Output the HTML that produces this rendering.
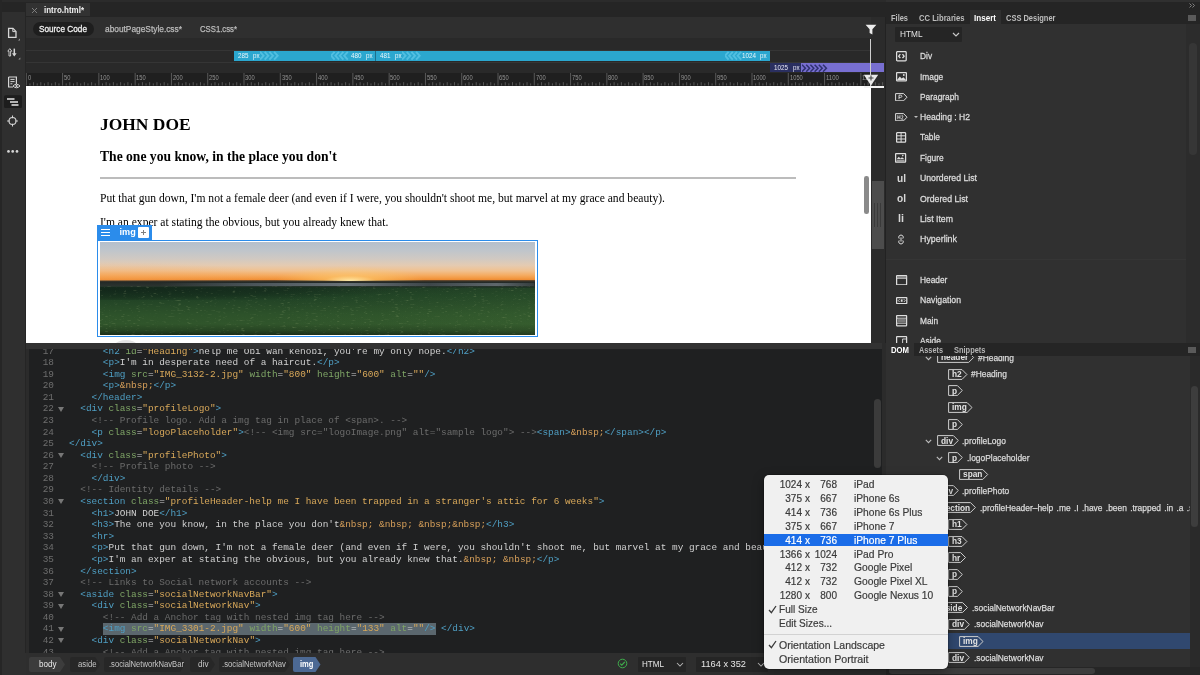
<!DOCTYPE html><html><head><meta charset="utf-8"><title>Dreamweaver</title><style>
*{margin:0;padding:0;box-sizing:border-box}
html,body{width:1200px;height:675px;overflow:hidden;background:#2d2d2d}
body{position:relative;font-family:"Liberation Sans",sans-serif;font-size:10px;color:#c8c8c8}
.a{position:absolute}
.t{position:absolute;white-space:pre;line-height:1}
.ui{font-family:"Liberation Sans",sans-serif;font-size:9.6px;color:#c4c4c4;transform-origin:0 50%}
.b{font-weight:bold}
.code{position:absolute;white-space:pre;font-family:"Liberation Mono",monospace;font-size:9.4051px;line-height:11.58px;height:11.58px;color:#d0d0d0}
.ln{position:absolute;white-space:pre;font-family:"Liberation Mono",monospace;font-size:9.4051px;line-height:11.58px;height:11.58px;color:#6e6e6e;text-align:right;width:30px}
.tg{color:#4f9fc4}.at{color:#7fa566}.st{color:#d8a85a}.cm{color:#6b6b6b}.en{color:#d8a05a}
.serif{font-family:"Liberation Serif",serif;color:#000}
</style></head><body><div id="root" style="position:absolute;left:0;top:0;width:1200px;height:675px;will-change:transform">
<div class="a" style="left:0px;top:0px;width:1200px;height:2px;background:#2b2b2b;"></div>
<div class="a" style="left:0px;top:2px;width:886px;height:15px;background:#252525;"></div>
<div class="a" style="left:26px;top:3px;width:64px;height:13px;background:#323232;"></div>
<div class="a" style="left:0px;top:12px;width:26px;height:663px;background:#2f2f2f;"></div>
<div class="a" style="left:0px;top:0px;width:2px;height:675px;background:#262626;"></div>
<div class="a" style="left:26px;top:17px;width:858px;height:56px;background:#2f2f2f;"></div>
<div class="a" style="left:26px;top:38px;width:858px;height:35px;background:#292929;"></div>
<div class="a" style="left:25px;top:12px;width:1px;height:641px;background:#252525;"></div>
<div class="a" style="left:26px;top:50px;width:858px;height:1px;background:#353535;"></div>
<div class="a" style="left:26px;top:62px;width:858px;height:1px;background:#353535;"></div>
<div class="a" style="left:26px;top:73px;width:858px;height:12.5px;background:#1f1f1f;"></div>
<div class="a" style="left:26px;top:85.5px;width:845px;height:257.5px;background:#ffffff;"></div>
<div class="a" style="left:26px;top:343px;width:860px;height:6px;background:#323232;"></div>
<div class="a" style="left:26px;top:349px;width:860px;height:304px;background:#1f2021;"></div>
<div class="a" style="left:26px;top:349px;width:3px;height:304px;background:#2b2b2b;"></div>
<div class="a" style="left:882px;top:343px;width:4px;height:310px;background:#2b2b2b;"></div>
<div class="a" style="left:26px;top:653px;width:860px;height:22px;background:#2e2e2e;"></div>
<div class="a" style="left:871px;top:17px;width:13.5px;height:326px;background:#2b2b2b;"></div>
<div class="a" style="left:884.5px;top:17px;width:1.5px;height:326px;background:#222222;"></div>
<div class="a" style="left:886px;top:0px;width:314px;height:675px;background:#303030;"></div>
<svg class="a" style="left:31px;top:6.7px" width="7" height="7" viewBox="0 0 7 7"><path d="M1 1L6 6M6 1L1 6" stroke="#868686" stroke-width="0.9" fill="none"/></svg>
<div class="t ui" style="left:44.00px;top:3.10px;height:14px;line-height:14px;font-size:9.50px;color:#f0f0f0;font-weight:bold;transform:scaleX(0.8422);">intro.html*</div>
<div class="a" style="left:32.7px;top:22px;width:61px;height:14px;border-radius:7px;background:#1e1e1e"></div>
<div class="t ui" style="left:39.00px;top:22.00px;height:14px;line-height:14px;font-size:9.60px;color:#f0f0f0;-webkit-text-stroke:0.3px #f0f0f0;transform:scaleX(0.8566);">Source Code</div>
<div class="t ui" style="left:105.00px;top:22.00px;height:14px;line-height:14px;font-size:9.60px;color:#bdbdbd;-webkit-text-stroke:0.25px #bdbdbd;transform:scaleX(0.8692);">aboutPageStyle.css*</div>
<div class="t ui" style="left:200.00px;top:22.00px;height:14px;line-height:14px;font-size:9.60px;color:#bdbdbd;-webkit-text-stroke:0.25px #bdbdbd;transform:scaleX(0.8064);">CSS1.css*</div>
<div class="a" style="left:234px;top:51px;width:536px;height:10.2px;background:#2ba7cf"></div>
<div class="a" style="left:375px;top:51px;width:1px;height:10.2px;background:#1d6f8c"></div>
<div class="a" style="left:770px;top:63.2px;width:114px;height:9.3px;background:#786fd1"></div>
<div class="a" style="left:770px;top:63.2px;width:31px;height:9.3px;background:#2a2f60"></div>
<div class="t ui" style="left:237.50px;top:49.40px;height:14px;line-height:14px;font-size:7.40px;color:#e9f6fb;transform:scaleX(0.8504);">285</div>
<div class="t ui" style="left:252.50px;top:49.40px;height:14px;line-height:14px;font-size:7.40px;color:#e9f6fb;transform:scaleX(0.8445);">px</div>
<svg class="a" style="left:259.6px;top:51.4px" width="22.4" height="9.4"><path d="M0.0 0.8L3.6 4.7L0.0 8.6M4.7 0.8L8.3 4.7L4.7 8.6M9.4 0.8L13.0 4.7L9.4 8.6M14.1 0.8L17.7 4.7L14.1 8.6" stroke="#52bfe1" stroke-width="1.9" fill="none"/></svg>
<svg class="a" style="left:331.0px;top:51.4px" width="21.2" height="9.4"><path d="M3.6 0.8L0.0 4.7L3.6 8.6M8.0 0.8L4.4 4.7L8.0 8.6M12.4 0.8L8.8 4.7L12.4 8.6M16.8 0.8L13.2 4.7L16.8 8.6" stroke="#52bfe1" stroke-width="1.9" fill="none"/></svg>
<div class="t ui" style="left:351.00px;top:49.40px;height:14px;line-height:14px;font-size:7.40px;color:#e9f6fb;transform:scaleX(0.8504);">480</div>
<div class="t ui" style="left:366.00px;top:49.40px;height:14px;line-height:14px;font-size:7.40px;color:#e9f6fb;transform:scaleX(0.8445);">px</div>
<div class="t ui" style="left:379.60px;top:49.40px;height:14px;line-height:14px;font-size:7.40px;color:#e9f6fb;transform:scaleX(0.8504);">481</div>
<div class="t ui" style="left:394.60px;top:49.40px;height:14px;line-height:14px;font-size:7.40px;color:#e9f6fb;transform:scaleX(0.8445);">px</div>
<svg class="a" style="left:401.7px;top:51.4px" width="22.4" height="9.4"><path d="M0.0 0.8L3.6 4.7L0.0 8.6M4.7 0.8L8.3 4.7L4.7 8.6M9.4 0.8L13.0 4.7L9.4 8.6M14.1 0.8L17.7 4.7L14.1 8.6" stroke="#52bfe1" stroke-width="1.9" fill="none"/></svg>
<svg class="a" style="left:724.5px;top:51.4px" width="20.4" height="9.4"><path d="M3.6 0.8L0.0 4.7L3.6 8.6M7.8 0.8L4.2 4.7L7.8 8.6M12.0 0.8L8.4 4.7L12.0 8.6M16.2 0.8L12.6 4.7L16.2 8.6" stroke="#52bfe1" stroke-width="1.9" fill="none"/></svg>
<div class="t ui" style="left:741.70px;top:49.40px;height:14px;line-height:14px;font-size:7.40px;color:#e9f6fb;transform:scaleX(0.8504);">1024</div>
<div class="t ui" style="left:760.20px;top:49.40px;height:14px;line-height:14px;font-size:7.40px;color:#e9f6fb;transform:scaleX(0.8445);">px</div>
<div class="t ui" style="left:774.20px;top:61.00px;height:14px;line-height:14px;font-size:7.40px;color:#e6e6f5;transform:scaleX(0.8504);">1025</div>
<div class="t ui" style="left:792.70px;top:61.00px;height:14px;line-height:14px;font-size:7.40px;color:#e6e6f5;transform:scaleX(0.8445);">px</div>
<svg class="a" style="left:802.0px;top:63.6px" width="28.6" height="8.5"><path d="M0.0 0.8L3.4 4.2L0.0 7.7M4.2 0.8L7.6 4.2L4.2 7.7M8.4 0.8L11.8 4.2L8.4 7.7M12.6 0.8L16.0 4.2L12.6 7.7M16.8 0.8L20.2 4.2L16.8 7.7M21.0 0.8L24.4 4.2L21.0 7.7" stroke="#2f3170" stroke-width="1.5" fill="none"/></svg>
<svg class="a" style="left:26px;top:73px" width="858" height="12.5"><path d="M0.30 0.0V12.5M3.93 10.4V12.5M7.56 9.2V12.5M11.19 10.4V12.5M14.81 9.2V12.5M18.44 10.4V12.5M22.07 9.2V12.5M25.70 10.4V12.5M29.33 9.2V12.5M32.96 10.4V12.5M36.59 0.0V12.5M40.21 10.4V12.5M43.84 9.2V12.5M47.47 10.4V12.5M51.10 9.2V12.5M54.73 10.4V12.5M58.36 9.2V12.5M61.98 10.4V12.5M65.61 9.2V12.5M69.24 10.4V12.5M72.87 0.0V12.5M76.50 10.4V12.5M80.13 9.2V12.5M83.76 10.4V12.5M87.38 9.2V12.5M91.01 10.4V12.5M94.64 9.2V12.5M98.27 10.4V12.5M101.90 9.2V12.5M105.53 10.4V12.5M109.16 0.0V12.5M112.78 10.4V12.5M116.41 9.2V12.5M120.04 10.4V12.5M123.67 9.2V12.5M127.30 10.4V12.5M130.93 9.2V12.5M134.55 10.4V12.5M138.18 9.2V12.5M141.81 10.4V12.5M145.44 0.0V12.5M149.07 10.4V12.5M152.70 9.2V12.5M156.33 10.4V12.5M159.95 9.2V12.5M163.58 10.4V12.5M167.21 9.2V12.5M170.84 10.4V12.5M174.47 9.2V12.5M178.10 10.4V12.5M181.73 0.0V12.5M185.35 10.4V12.5M188.98 9.2V12.5M192.61 10.4V12.5M196.24 9.2V12.5M199.87 10.4V12.5M203.50 9.2V12.5M207.12 10.4V12.5M210.75 9.2V12.5M214.38 10.4V12.5M218.01 0.0V12.5M221.64 10.4V12.5M225.27 9.2V12.5M228.90 10.4V12.5M232.52 9.2V12.5M236.15 10.4V12.5M239.78 9.2V12.5M243.41 10.4V12.5M247.04 9.2V12.5M250.67 10.4V12.5M254.30 0.0V12.5M257.92 10.4V12.5M261.55 9.2V12.5M265.18 10.4V12.5M268.81 9.2V12.5M272.44 10.4V12.5M276.07 9.2V12.5M279.69 10.4V12.5M283.32 9.2V12.5M286.95 10.4V12.5M290.58 0.0V12.5M294.21 10.4V12.5M297.84 9.2V12.5M301.47 10.4V12.5M305.09 9.2V12.5M308.72 10.4V12.5M312.35 9.2V12.5M315.98 10.4V12.5M319.61 9.2V12.5M323.24 10.4V12.5M326.87 0.0V12.5M330.49 10.4V12.5M334.12 9.2V12.5M337.75 10.4V12.5M341.38 9.2V12.5M345.01 10.4V12.5M348.64 9.2V12.5M352.26 10.4V12.5M355.89 9.2V12.5M359.52 10.4V12.5M363.15 0.0V12.5M366.78 10.4V12.5M370.41 9.2V12.5M374.04 10.4V12.5M377.66 9.2V12.5M381.29 10.4V12.5M384.92 9.2V12.5M388.55 10.4V12.5M392.18 9.2V12.5M395.81 10.4V12.5M399.44 0.0V12.5M403.06 10.4V12.5M406.69 9.2V12.5M410.32 10.4V12.5M413.95 9.2V12.5M417.58 10.4V12.5M421.21 9.2V12.5M424.83 10.4V12.5M428.46 9.2V12.5M432.09 10.4V12.5M435.72 0.0V12.5M439.35 10.4V12.5M442.98 9.2V12.5M446.61 10.4V12.5M450.23 9.2V12.5M453.86 10.4V12.5M457.49 9.2V12.5M461.12 10.4V12.5M464.75 9.2V12.5M468.38 10.4V12.5M472.00 0.0V12.5M475.63 10.4V12.5M479.26 9.2V12.5M482.89 10.4V12.5M486.52 9.2V12.5M490.15 10.4V12.5M493.78 9.2V12.5M497.40 10.4V12.5M501.03 9.2V12.5M504.66 10.4V12.5M508.29 0.0V12.5M511.92 10.4V12.5M515.55 9.2V12.5M519.18 10.4V12.5M522.80 9.2V12.5M526.43 10.4V12.5M530.06 9.2V12.5M533.69 10.4V12.5M537.32 9.2V12.5M540.95 10.4V12.5M544.57 0.0V12.5M548.20 10.4V12.5M551.83 9.2V12.5M555.46 10.4V12.5M559.09 9.2V12.5M562.72 10.4V12.5M566.35 9.2V12.5M569.97 10.4V12.5M573.60 9.2V12.5M577.23 10.4V12.5M580.86 0.0V12.5M584.49 10.4V12.5M588.12 9.2V12.5M591.75 10.4V12.5M595.37 9.2V12.5M599.00 10.4V12.5M602.63 9.2V12.5M606.26 10.4V12.5M609.89 9.2V12.5M613.52 10.4V12.5M617.14 0.0V12.5M620.77 10.4V12.5M624.40 9.2V12.5M628.03 10.4V12.5M631.66 9.2V12.5M635.29 10.4V12.5M638.92 9.2V12.5M642.54 10.4V12.5M646.17 9.2V12.5M649.80 10.4V12.5M653.43 0.0V12.5M657.06 10.4V12.5M660.69 9.2V12.5M664.32 10.4V12.5M667.94 9.2V12.5M671.57 10.4V12.5M675.20 9.2V12.5M678.83 10.4V12.5M682.46 9.2V12.5M686.09 10.4V12.5M689.71 0.0V12.5M693.34 10.4V12.5M696.97 9.2V12.5M700.60 10.4V12.5M704.23 9.2V12.5M707.86 10.4V12.5M711.49 9.2V12.5M715.11 10.4V12.5M718.74 9.2V12.5M722.37 10.4V12.5M726.00 0.0V12.5M729.63 10.4V12.5M733.26 9.2V12.5M736.89 10.4V12.5M740.51 9.2V12.5M744.14 10.4V12.5M747.77 9.2V12.5M751.40 10.4V12.5M755.03 9.2V12.5M758.66 10.4V12.5M762.28 0.0V12.5M765.91 10.4V12.5M769.54 9.2V12.5M773.17 10.4V12.5M776.80 9.2V12.5M780.43 10.4V12.5M784.06 9.2V12.5M787.68 10.4V12.5M791.31 9.2V12.5M794.94 10.4V12.5M798.57 0.0V12.5M802.20 10.4V12.5M805.83 9.2V12.5M809.46 10.4V12.5M813.08 9.2V12.5M816.71 10.4V12.5M820.34 9.2V12.5M823.97 10.4V12.5M827.60 9.2V12.5M831.23 10.4V12.5M834.86 0.0V12.5M838.48 10.4V12.5M842.11 9.2V12.5M845.74 10.4V12.5M849.37 9.2V12.5M853.00 10.4V12.5M856.63 9.2V12.5" stroke="#6c6c6c" stroke-width="0.75" fill="none"/></svg>
<div class="t ui" style="left:27.60px;top:70.60px;height:14px;line-height:14px;font-size:6.80px;color:#929292;transform:scaleX(0.8461);">0</div>
<div class="t ui" style="left:63.89px;top:70.60px;height:14px;line-height:14px;font-size:6.80px;color:#929292;transform:scaleX(0.8461);">50</div>
<div class="t ui" style="left:100.17px;top:70.60px;height:14px;line-height:14px;font-size:6.80px;color:#929292;transform:scaleX(0.8461);">100</div>
<div class="t ui" style="left:136.46px;top:70.60px;height:14px;line-height:14px;font-size:6.80px;color:#929292;transform:scaleX(0.8461);">150</div>
<div class="t ui" style="left:172.74px;top:70.60px;height:14px;line-height:14px;font-size:6.80px;color:#929292;transform:scaleX(0.8461);">200</div>
<div class="t ui" style="left:209.03px;top:70.60px;height:14px;line-height:14px;font-size:6.80px;color:#929292;transform:scaleX(0.8461);">250</div>
<div class="t ui" style="left:245.31px;top:70.60px;height:14px;line-height:14px;font-size:6.80px;color:#929292;transform:scaleX(0.8461);">300</div>
<div class="t ui" style="left:281.60px;top:70.60px;height:14px;line-height:14px;font-size:6.80px;color:#929292;transform:scaleX(0.8461);">350</div>
<div class="t ui" style="left:317.88px;top:70.60px;height:14px;line-height:14px;font-size:6.80px;color:#929292;transform:scaleX(0.8461);">400</div>
<div class="t ui" style="left:354.17px;top:70.60px;height:14px;line-height:14px;font-size:6.80px;color:#929292;transform:scaleX(0.8461);">450</div>
<div class="t ui" style="left:390.45px;top:70.60px;height:14px;line-height:14px;font-size:6.80px;color:#929292;transform:scaleX(0.8461);">500</div>
<div class="t ui" style="left:426.74px;top:70.60px;height:14px;line-height:14px;font-size:6.80px;color:#929292;transform:scaleX(0.8461);">550</div>
<div class="t ui" style="left:463.02px;top:70.60px;height:14px;line-height:14px;font-size:6.80px;color:#929292;transform:scaleX(0.8461);">600</div>
<div class="t ui" style="left:499.31px;top:70.60px;height:14px;line-height:14px;font-size:6.80px;color:#929292;transform:scaleX(0.8461);">650</div>
<div class="t ui" style="left:535.59px;top:70.60px;height:14px;line-height:14px;font-size:6.80px;color:#929292;transform:scaleX(0.8461);">700</div>
<div class="t ui" style="left:571.87px;top:70.60px;height:14px;line-height:14px;font-size:6.80px;color:#929292;transform:scaleX(0.8461);">750</div>
<div class="t ui" style="left:608.16px;top:70.60px;height:14px;line-height:14px;font-size:6.80px;color:#929292;transform:scaleX(0.8461);">800</div>
<div class="t ui" style="left:644.44px;top:70.60px;height:14px;line-height:14px;font-size:6.80px;color:#929292;transform:scaleX(0.8461);">850</div>
<div class="t ui" style="left:680.73px;top:70.60px;height:14px;line-height:14px;font-size:6.80px;color:#929292;transform:scaleX(0.8461);">900</div>
<div class="t ui" style="left:717.01px;top:70.60px;height:14px;line-height:14px;font-size:6.80px;color:#929292;transform:scaleX(0.8461);">950</div>
<div class="t ui" style="left:753.30px;top:70.60px;height:14px;line-height:14px;font-size:6.80px;color:#929292;transform:scaleX(0.8461);">1000</div>
<div class="t ui" style="left:789.58px;top:70.60px;height:14px;line-height:14px;font-size:6.80px;color:#929292;transform:scaleX(0.8461);">1050</div>
<div class="t ui" style="left:825.87px;top:70.60px;height:14px;line-height:14px;font-size:6.80px;color:#929292;transform:scaleX(0.8753);">1100</div>
<div class="t ui" style="left:862.15px;top:70.60px;height:14px;line-height:14px;font-size:6.80px;color:#929292;transform:scaleX(0.8753);">1150</div>
<svg class="a" style="left:865px;top:24px" width="12" height="11" viewBox="0 0 12 11"><path d="M0.6 0.8H11.4L7.4 5.2V10.4L4.6 9V5.2Z" fill="#ececec"/></svg>
<div class="a" style="left:870px;top:39px;width:1.4px;height:47px;background:#cfcfcf"></div>
<svg class="a" style="left:863px;top:74px" width="16" height="12" viewBox="0 0 16 12"><path d="M0.8 0.8H15.2L8 11.4Z" fill="#e9e9e9"/><path d="M5.5 4H10.5M8 1.6V6.4" stroke="#444" stroke-width="1.1" fill="none"/></svg>
<div class="a" style="left:864px;top:85.5px;width:20px;height:2px;background:#f4f4f4"></div>
<svg class="a" style="left:0;top:20px" width="26" height="150" viewBox="0 20 26 150" fill="none" stroke="#d6d6d6" stroke-width="1.3">
<path d="M8.6 28.4H13L16 31.4V37.4H8.6Z"/><path d="M12.8 28.6V31.6H15.8" stroke-width="1"/>
<path d="M20 38.6V40.6H18Z" fill="#9a9a9a" stroke="none"/>
<path d="M9.8 48.6L7.8 51.2H9V56H10.6V51.2H11.8Z" stroke-width="0.9"/>
<path d="M14.3 48.6V55.4" stroke-width="1.5"/><path d="M12 53.2L14.3 56.6L16.6 53.2Z" fill="#d6d6d6" stroke="none"/>
<path d="M20.3 57.6V59.6H18.3Z" fill="#9a9a9a" stroke="none"/>
<path d="M8.6 77H16.4V84" stroke-width="1.2"/><path d="M8.6 77V87H13" stroke-width="1.2"/><path d="M10.4 79.4H14.6M10.4 81.6H14.6M10.4 83.8H12.4" stroke-width="1"/>
<path d="M13 86Q16.5 82.4 20 86Q16.5 89.6 13 86Z" fill="#2f2f2f" stroke-width="1"/><circle cx="16.5" cy="86" r="1.1" fill="#d6d6d6" stroke="none"/>
<rect x="4" y="95.3" width="18" height="12.7" rx="1.5" fill="#1d1d1d" stroke="none"/>
<path d="M7 99H14.5M10 102H18M11.5 105H18.5" stroke-width="1.6" stroke="#e6e6e6"/>
<circle cx="12.5" cy="121" r="3.5" stroke-width="1.05"/><path d="M12.5 115.6V118.2M12.5 123.8V126.4M7.1 121H9.7M15.3 121H17.9" stroke-width="1.05"/>
<circle cx="8.5" cy="151.4" r="1.35" fill="#d6d6d6" stroke="none"/><circle cx="12.7" cy="151.4" r="1.35" fill="#d6d6d6" stroke="none"/><circle cx="17" cy="151.4" r="1.35" fill="#d6d6d6" stroke="none"/>
</svg>
<div class="a" style="left:26px;top:85.5px;width:846px;height:257.5px;overflow:hidden">
<div class="t serif" style="left:74.00px;top:28.33px;height:20.94px;line-height:20.94px;font-size:17.45px;font-weight:bold;">JOHN DOE</div>
<div class="t serif" style="left:74.00px;top:63.34px;height:16.32px;line-height:16.32px;font-size:13.60px;font-weight:bold;">The one you know, in the place you don't</div>
<div class="a" style="left:74.00px;top:91.25px;width:696px;height:2px;background:#bcbcbc"></div>
<div class="t serif" style="left:74.00px;top:106.54px;height:13.92px;line-height:13.92px;font-size:11.60px;">Put that gun down, I'm not a female deer (and even if I were, you shouldn't shoot me, but marvel at my grace and beauty).</div>
<div class="t serif" style="left:74.00px;top:130.54px;height:13.92px;line-height:13.92px;font-size:11.60px;">I'm an exper at stating the obvious, but you already knew that.</div>
<div class="a" style="left:71.40px;top:154.90px;width:440.7px;height:96.2px;border:1.2px solid #2b8ceb;background:#fff"></div>
<div class="a" id="photo" style="left:74.40px;top:156.60px;width:434.4px;height:93.3px;overflow:hidden;background:linear-gradient(180deg,#b4bfcc 0%,#bfc5cb 9%,#d0c9c2 18%,#e4cbb2 25%,#f0c190 31%,#f5ad64 35.5%,#f39a44 38.8%,#ee8a31 40.8%,#4a3a2a 41.5%,#242a27 43.2%,#2a322e 47%,#1b3722 49.5%,#1e3f24 56%,#254727 66%,#2d522a 78%,#30552b 88%,#274523 95%,#1a2d19 100%)">
<div class="a" style="left:0;top:20px;width:200px;height:18.5px;background:radial-gradient(ellipse 100% 100% at 0% 100%,rgba(245,160,80,.4),rgba(245,160,80,0))"></div>
<div class="a" style="left:175px;top:24px;width:150px;height:14.5px;background:radial-gradient(ellipse 50% 100% at 50% 100%,rgba(255,236,170,1),rgba(255,205,110,.55) 35%,rgba(255,190,90,0) 100%)"></div>
<div class="a" style="left:60px;top:41.4px;width:374px;height:2.6px;background:linear-gradient(90deg,rgba(110,122,135,0),rgba(110,122,135,.5) 25%,rgba(140,150,160,.65) 50%,rgba(95,105,118,.4) 72%,rgba(130,140,150,.6) 90%,rgba(110,122,135,.2))"></div>
<div class="a" style="left:0;top:45px;width:300px;height:13px;background:radial-gradient(ellipse 100% 100% at 0% 20%,rgba(16,34,24,.75),rgba(16,34,24,.45) 60%,rgba(16,34,24,0) 100%)"></div>
<div class="a" style="left:180px;top:46px;width:255px;height:47px;background:linear-gradient(90deg,rgba(80,130,60,0),rgba(80,130,60,.16))"></div>
<svg class="a" style="left:0;top:44px" width="435" height="50"><filter id="nz" x="0" y="0" width="100%" height="100%"><feTurbulence type="fractalNoise" baseFrequency="0.22 0.7" numOctaves="2" seed="7"/><feColorMatrix values="0 0 0 0 0.55  0 0 0 0 0.62  0 0 0 0 0.3  0.5 0.5 0 0 -0.58"/></filter><rect width="435" height="50" filter="url(#nz)"/></svg>
</div>
<div class="a" style="left:71.40px;top:139.50px;width:54.6px;height:16px;background:#2b8ceb"></div>
<div class="a" style="left:75.00px;top:143.50px;width:9.4px;height:1.45px;background:#fff"></div>
<div class="a" style="left:75.00px;top:146.50px;width:9.4px;height:1.45px;background:#fff"></div>
<div class="a" style="left:75.00px;top:149.50px;width:9.4px;height:1.45px;background:#fff"></div>
<div class="t" style="left:93.60px;top:140.80px;height:12px;line-height:12px;font-family:'Liberation Sans',sans-serif;font-weight:bold;font-size:9.1px;color:#fff">img</div>
<div class="a" style="left:111.70px;top:141.30px;width:11.5px;height:11.5px;background:#fff;border-radius:1px"></div>
<div class="a" style="left:115.00px;top:146.70px;width:5px;height:1px;background:#808080"></div>
<div class="a" style="left:117.00px;top:144.70px;width:1px;height:5px;background:#808080"></div>
<div class="a" style="left:82.00px;top:254.00px;width:36px;height:36px;border-radius:50%;background:#e3e3e3"></div>
<div class="a" style="left:838.20px;top:90.80px;width:4.6px;height:37.5px;border-radius:2.3px;background:#8a8a8a"></div>
</div>
<div class="a" style="left:871.7px;top:180.8px;width:12.2px;height:68.5px;background:#4c4c4c"></div>
<div class="a" style="left:874.3px;top:203px;width:1px;height:24px;background:#3a3a3a"></div>
<div class="a" style="left:877.3px;top:203px;width:1px;height:24px;background:#3a3a3a"></div>
<div class="a" style="left:880.3px;top:203px;width:1px;height:24px;background:#3a3a3a"></div>
<div class="a" style="left:29px;top:349px;width:853px;height:304px;overflow:hidden">
<div class="ln" style="left:-5.00px;top:-3.47px">17</div>
<div class="code" style="left:73.86px;top:-3.47px"><span class="tg">&lt;h2</span> <span class="at">id</span><span class="eq">=</span><span class="st">"Heading"</span><span class="tg">&gt;</span>help me Obi wan kenobi, you're my only hope.<span class="tg">&lt;/h2</span><span class="tg">&gt;</span></div>
<div class="ln" style="left:-5.00px;top:8.11px">18</div>
<div class="code" style="left:73.86px;top:8.11px"><span class="tg">&lt;p</span><span class="tg">&gt;</span>I'm in desperate need of a haircut.<span class="tg">&lt;/p</span><span class="tg">&gt;</span></div>
<div class="ln" style="left:-5.00px;top:19.69px">19</div>
<div class="code" style="left:73.86px;top:19.69px"><span class="tg">&lt;img</span> <span class="at">src</span><span class="eq">=</span><span class="st">"IMG_3132-2.jpg"</span> <span class="at">width</span><span class="eq">=</span><span class="st">"800"</span> <span class="at">height</span><span class="eq">=</span><span class="st">"600"</span> <span class="at">alt</span><span class="eq">=</span><span class="st">""</span><span class="tg">/</span><span class="tg">&gt;</span></div>
<div class="ln" style="left:-5.00px;top:31.27px">20</div>
<div class="code" style="left:73.86px;top:31.27px"><span class="tg">&lt;p</span><span class="tg">&gt;</span><span class="en">&amp;nbsp;</span><span class="tg">&lt;/p</span><span class="tg">&gt;</span></div>
<div class="ln" style="left:-5.00px;top:42.85px">21</div>
<div class="code" style="left:62.58px;top:42.85px"><span class="tg">&lt;/header</span><span class="tg">&gt;</span></div>
<div class="ln" style="left:-5.00px;top:54.43px">22</div>
<div class="a" style="left:28.50px;top:57.72px;width:0;height:0;border-left:3px solid transparent;border-right:3px solid transparent;border-top:5px solid #777"></div>
<div class="code" style="left:51.29px;top:54.43px"><span class="tg">&lt;div</span> <span class="at">class</span><span class="eq">=</span><span class="st">"profileLogo"</span><span class="tg">&gt;</span></div>
<div class="ln" style="left:-5.00px;top:66.01px">23</div>
<div class="code" style="left:62.58px;top:66.01px"><span class="cm">&lt;!-- Profile logo. Add a img tag in place of &lt;span&gt;. --&gt;</span></div>
<div class="ln" style="left:-5.00px;top:77.59px">24</div>
<div class="code" style="left:62.58px;top:77.59px"><span class="tg">&lt;p</span> <span class="at">class</span><span class="eq">=</span><span class="st">"logoPlaceholder"</span><span class="tg">&gt;</span><span class="cm">&lt;!-- &lt;img src="logoImage.png" alt="sample logo"&gt; --&gt;</span><span class="tg">&lt;span</span><span class="tg">&gt;</span><span class="en">&amp;nbsp;</span><span class="tg">&lt;/span</span><span class="tg">&gt;</span><span class="tg">&lt;/p</span><span class="tg">&gt;</span></div>
<div class="ln" style="left:-5.00px;top:89.17px">25</div>
<div class="code" style="left:40.00px;top:89.17px"><span class="tg">&lt;/div</span><span class="tg">&gt;</span></div>
<div class="ln" style="left:-5.00px;top:100.75px">26</div>
<div class="a" style="left:28.50px;top:104.04px;width:0;height:0;border-left:3px solid transparent;border-right:3px solid transparent;border-top:5px solid #777"></div>
<div class="code" style="left:51.29px;top:100.75px"><span class="tg">&lt;div</span> <span class="at">class</span><span class="eq">=</span><span class="st">"profilePhoto"</span><span class="tg">&gt;</span></div>
<div class="ln" style="left:-5.00px;top:112.33px">27</div>
<div class="code" style="left:62.58px;top:112.33px"><span class="cm">&lt;!-- Profile photo --&gt;</span></div>
<div class="ln" style="left:-5.00px;top:123.91px">28</div>
<div class="code" style="left:62.58px;top:123.91px"><span class="tg">&lt;/div</span><span class="tg">&gt;</span></div>
<div class="ln" style="left:-5.00px;top:135.49px">29</div>
<div class="code" style="left:51.29px;top:135.49px"><span class="cm">&lt;!-- Identity details --&gt;</span></div>
<div class="ln" style="left:-5.00px;top:147.07px">30</div>
<div class="a" style="left:28.50px;top:150.36px;width:0;height:0;border-left:3px solid transparent;border-right:3px solid transparent;border-top:5px solid #777"></div>
<div class="code" style="left:51.29px;top:147.07px"><span class="tg">&lt;section</span> <span class="at">class</span><span class="eq">=</span><span class="st">"profileHeader-help me I have been trapped in a stranger's attic for 6 weeks"</span><span class="tg">&gt;</span></div>
<div class="ln" style="left:-5.00px;top:158.65px">31</div>
<div class="code" style="left:62.58px;top:158.65px"><span class="tg">&lt;h1</span><span class="tg">&gt;</span>JOHN DOE<span class="tg">&lt;/h1</span><span class="tg">&gt;</span></div>
<div class="ln" style="left:-5.00px;top:170.23px">32</div>
<div class="code" style="left:62.58px;top:170.23px"><span class="tg">&lt;h3</span><span class="tg">&gt;</span>The one you know, in the place you don't<span class="en">&amp;nbsp;</span> <span class="en">&amp;nbsp;</span> <span class="en">&amp;nbsp;</span><span class="en">&amp;nbsp;</span><span class="tg">&lt;/h3</span><span class="tg">&gt;</span></div>
<div class="ln" style="left:-5.00px;top:181.81px">33</div>
<div class="code" style="left:62.58px;top:181.81px"><span class="tg">&lt;hr</span><span class="tg">&gt;</span></div>
<div class="ln" style="left:-5.00px;top:193.39px">34</div>
<div class="code" style="left:62.58px;top:193.39px"><span class="tg">&lt;p</span><span class="tg">&gt;</span>Put that gun down, I'm not a female deer (and even if I were, you shouldn't shoot me, but marvel at my grace and beauty).<span class="tg">&lt;/p</span><span class="tg">&gt;</span></div>
<div class="ln" style="left:-5.00px;top:204.97px">35</div>
<div class="code" style="left:62.58px;top:204.97px"><span class="tg">&lt;p</span><span class="tg">&gt;</span>I'm an exper at stating the obvious, but you already knew that.<span class="en">&amp;nbsp;</span> <span class="en">&amp;nbsp;</span><span class="tg">&lt;/p</span><span class="tg">&gt;</span></div>
<div class="ln" style="left:-5.00px;top:216.55px">36</div>
<div class="code" style="left:51.29px;top:216.55px"><span class="tg">&lt;/section</span><span class="tg">&gt;</span></div>
<div class="ln" style="left:-5.00px;top:228.13px">37</div>
<div class="code" style="left:51.29px;top:228.13px"><span class="cm">&lt;!-- Links to Social network accounts --&gt;</span></div>
<div class="ln" style="left:-5.00px;top:239.71px">38</div>
<div class="a" style="left:28.50px;top:243.00px;width:0;height:0;border-left:3px solid transparent;border-right:3px solid transparent;border-top:5px solid #777"></div>
<div class="code" style="left:51.29px;top:239.71px"><span class="tg">&lt;aside</span> <span class="at">class</span><span class="eq">=</span><span class="st">"socialNetworkNavBar"</span><span class="tg">&gt;</span></div>
<div class="ln" style="left:-5.00px;top:251.29px">39</div>
<div class="a" style="left:28.50px;top:254.58px;width:0;height:0;border-left:3px solid transparent;border-right:3px solid transparent;border-top:5px solid #777"></div>
<div class="code" style="left:62.58px;top:251.29px"><span class="tg">&lt;div</span> <span class="at">class</span><span class="eq">=</span><span class="st">"socialNetworkNav"</span><span class="tg">&gt;</span></div>
<div class="ln" style="left:-5.00px;top:262.87px">40</div>
<div class="code" style="left:73.86px;top:262.87px"><span class="cm">&lt;!-- Add a Anchor tag with nested img tag here --&gt;</span></div>
<div class="ln" style="left:-5.00px;top:274.45px">41</div>
<div class="a" style="left:28.50px;top:277.74px;width:0;height:0;border-left:3px solid transparent;border-right:3px solid transparent;border-top:5px solid #777"></div>
<div class="a" style="left:73.86px;top:274.45px;width:333.00px;height:11.58px;background:#5b676e"></div>
<div class="code" style="left:73.86px;top:274.45px"><span class="tg">&lt;img</span> <span class="at">src</span><span class="eq">=</span><span class="st">"IMG_3301-2.jpg"</span> <span class="at">width</span><span class="eq">=</span><span class="st">"600"</span> <span class="at">height</span><span class="eq">=</span><span class="st">"133"</span> <span class="at">alt</span><span class="eq">=</span><span class="st">""</span><span class="tg">/</span><span class="tg">&gt;</span> <span class="tg">&lt;/div</span><span class="tg">&gt;</span></div>
<div class="ln" style="left:-5.00px;top:286.03px">42</div>
<div class="a" style="left:28.50px;top:289.32px;width:0;height:0;border-left:3px solid transparent;border-right:3px solid transparent;border-top:5px solid #777"></div>
<div class="code" style="left:62.58px;top:286.03px"><span class="tg">&lt;div</span> <span class="at">class</span><span class="eq">=</span><span class="st">"socialNetworkNav"</span><span class="tg">&gt;</span></div>
<div class="ln" style="left:-5.00px;top:297.61px">43</div>
<div class="code" style="left:73.86px;top:297.61px"><span class="cm">&lt;!-- Add a Anchor tag with nested img tag here --&gt;</span></div>
</div>
<div class="a" style="left:873.5px;top:399px;width:7px;height:69px;border-radius:4px;background:#3b3b3b"></div>
<svg class="a" style="left:29.00px;top:656.50px" width="37.0" height="15.0"><path d="M2 0H31.0L36.0 7.5L31.0 15.0H2Q0 15.0 0 13.0V2Q0 0 2 0Z" fill="#3c3c3c"/></svg>
<div class="t ui" style="left:38.50px;top:657.00px;height:14px;line-height:14px;font-size:9.60px;color:#ececec;transform:scaleX(0.8406);">body</div>
<svg class="a" style="left:70.00px;top:656.50px" width="31.0" height="15.0"><path d="M2 0H25.0L30.0 7.5L25.0 15.0H2Q0 15.0 0 13.0V2Q0 0 2 0Z" fill="#272727"/></svg>
<div class="t ui" style="left:77.50px;top:657.00px;height:14px;line-height:14px;font-size:9.60px;color:#c6c6c6;transform:scaleX(0.8061);">aside</div>
<svg class="a" style="left:104.00px;top:656.50px" width="82.0" height="15.0"><path d="M2 0H76.0L81.0 7.5L76.0 15.0H2Q0 15.0 0 13.0V2Q0 0 2 0Z" fill="#272727"/></svg>
<div class="t ui" style="left:108.50px;top:657.00px;height:14px;line-height:14px;font-size:9.60px;color:#c6c6c6;transform:scaleX(0.7942);">.socialNetworkNavBar</div>
<svg class="a" style="left:190.00px;top:656.50px" width="26.0" height="15.0"><path d="M2 0H20.0L25.0 7.5L20.0 15.0H2Q0 15.0 0 13.0V2Q0 0 2 0Z" fill="#272727"/></svg>
<div class="t ui" style="left:197.50px;top:657.00px;height:14px;line-height:14px;font-size:9.60px;color:#c6c6c6;transform:scaleX(0.8556);">div</div>
<svg class="a" style="left:219.00px;top:656.50px" width="72.0" height="15.0"><path d="M2 0H66.0L71.0 7.5L66.0 15.0H2Q0 15.0 0 13.0V2Q0 0 2 0Z" fill="#272727"/></svg>
<div class="t ui" style="left:222.00px;top:657.00px;height:14px;line-height:14px;font-size:9.60px;color:#c6c6c6;transform:scaleX(0.8051);">.socialNetworkNav</div>
<svg class="a" style="left:292.50px;top:656.50px" width="28.5" height="15.0"><path d="M2 0H22.5L27.5 7.5L22.5 15.0H2Q0 15.0 0 13.0V2Q0 0 2 0Z" fill="#4c6994"/></svg>
<div class="t ui" style="left:300.00px;top:657.00px;height:14px;line-height:14px;font-size:9.60px;color:#ffffff;font-weight:bold;transform:scaleX(0.7910);">img</div>
<svg class="a" style="left:617px;top:658px" width="11" height="11" viewBox="0 0 11 11"><circle cx="5.5" cy="5.5" r="4.3" fill="none" stroke="#3fae4c" stroke-width="1"/><path d="M3.2 5.6L4.8 7.2L7.8 3.8" fill="none" stroke="#3fae4c" stroke-width="1.2"/></svg>
<div class="a" style="left:638px;top:656.5px;width:48px;height:15.5px;background:#252525;border-radius:1px"></div>
<div class="t ui" style="left:642.00px;top:657.20px;height:14px;line-height:14px;font-size:9.60px;color:#e6e6e6;transform:scaleX(0.8418);">HTML</div>
<svg class="a" style="left:675.5px;top:661.5px" width="8" height="6"><path d="M1 1L4 4L7 1" stroke="#b4b4b4" stroke-width="1.05" fill="none"/></svg>
<div class="a" style="left:696px;top:656.5px;width:72px;height:15.5px;background:#252525;border-radius:1px"></div>
<div class="t ui" style="left:701.00px;top:657.20px;height:14px;line-height:14px;font-size:9.60px;color:#e6e6e6;transform:scaleX(0.9616);">1164 x 352</div>
<svg class="a" style="left:757px;top:661.5px" width="8" height="6"><path d="M1 1L4 4L7 1" stroke="#b4b4b4" stroke-width="1.05" fill="none"/></svg>
<div class="a" style="left:886px;top:2px;width:314px;height:8px;background:#252525"></div>
<div class="a" style="left:886px;top:10px;width:314px;height:14px;background:#252525"></div>
<div class="a" style="left:970px;top:10px;width:31px;height:14px;background:#303030"></div>
<svg class="a" style="left:1189px;top:3px" width="7" height="5"><path d="M0.5 0.5L2.5 2.5L0.5 4.5M3.5 0.5L5.5 2.5L3.5 4.5" stroke="#8a8a8a" stroke-width="0.9" fill="none"/></svg>
<div class="t ui" style="left:891.00px;top:10.60px;height:14px;line-height:14px;font-size:9.30px;color:#bdbdbd;font-weight:bold;transform:scaleX(0.8021);">Files</div>
<div class="t ui" style="left:918.50px;top:10.60px;height:14px;line-height:14px;font-size:9.30px;color:#bdbdbd;font-weight:bold;transform:scaleX(0.8228);">CC Libraries</div>
<div class="t ui" style="left:974.00px;top:10.60px;height:14px;line-height:14px;font-size:9.30px;color:#ffffff;font-weight:bold;transform:scaleX(0.8687);">Insert</div>
<div class="t ui" style="left:1005.50px;top:10.60px;height:14px;line-height:14px;font-size:9.30px;color:#bdbdbd;font-weight:bold;transform:scaleX(0.8048);">CSS Designer</div>
<div class="a" style="left:1187.5px;top:14.5px;width:8px;height:6px;background:#5a5a5a"></div>
<div class="a" style="left:895px;top:27px;width:67px;height:14.5px;background:#252525;border-radius:1px"></div>
<div class="t ui" style="left:899.50px;top:27.30px;height:14px;line-height:14px;font-size:9.60px;color:#e2e2e2;transform:scaleX(0.8610);">HTML</div>
<svg class="a" style="left:952px;top:31.5px" width="8" height="6"><path d="M1 1L4 4L7 1" stroke="#c8c8c8" stroke-width="1.2" fill="none"/></svg>
<div class="a" style="left:1189px;top:43px;width:8px;height:112px;border-radius:4px;background:#3b3b3b"></div>
<div class="a" style="left:1186px;top:24px;width:14px;height:319px;background:rgba(0,0,0,.08)"></div>
<div class="a" style="left:886px;top:24px;width:300px;height:319px;overflow:hidden">
<svg class="a" style="left:9.50px;top:27.20px" width="11" height="10.6" viewBox="0 0 11 10.6" fill="none" stroke="#dedede" stroke-width="1.25"><rect x="0.6" y="0.6" width="9.6" height="9.2" rx="0.8"/><path d="M4.3 3.2L2.7 5.2L4.3 7.2M6.5 3.2L8.1 5.2L6.5 7.2" stroke-width="1.35"/></svg>
<div class="t ui" style="left:34px;top:25.40px;height:14px;line-height:14px;font-size:9.6px;color:#dcdcdc;-webkit-text-stroke:0.28px #dcdcdc;transform:scaleX(0.8700)">Div</div>
<svg class="a" style="left:9.50px;top:48.00px" width="11" height="9.6" viewBox="0 0 11 9.6" fill="none" stroke="#dedede" stroke-width="1.25"><rect x="0.6" y="0.6" width="9.8" height="8.2" rx="0.6"/><path d="M1 8L3.8 4.6L5.6 6.6L7.4 5.2L10 8Z" fill="#dedede" stroke="none"/><circle cx="7.8" cy="3" r="0.9" fill="#dedede" stroke="none"/></svg>
<div class="t ui" style="left:34px;top:45.90px;height:14px;line-height:14px;font-size:9.6px;color:#dcdcdc;-webkit-text-stroke:0.28px #dcdcdc;transform:scaleX(0.8700)">Image</div>
<svg class="a" style="left:9.00px;top:68.60px" width="13" height="8.6" viewBox="0 0 13 8.6" fill="none" stroke="#dedede" stroke-width="1.25"><path d="M0.6 0.6H8.6L12 4.2L8.6 7.8H0.6Z" stroke-width="1"/><path d="M4 6.2V2.2H5.6Q6.9 2.2 6.9 3.3Q6.9 4.4 5.6 4.4H4" stroke-width="0.9"/></svg>
<div class="t ui" style="left:34px;top:66.00px;height:14px;line-height:14px;font-size:9.6px;color:#dcdcdc;-webkit-text-stroke:0.28px #dcdcdc;transform:scaleX(0.8699)">Paragraph</div>
<svg class="a" style="left:9.00px;top:88.80px" width="13" height="8.6" viewBox="0 0 13 8.6" fill="none" stroke="#dedede" stroke-width="1.25"><path d="M0.6 0.6H8.6L12 4.2L8.6 7.8H0.6Z" stroke-width="1"/><path d="M2.8 2.2V6.2M5 2.2V6.2M2.8 4.2H5M6.4 3Q7.2 2 8 3Q8.2 3.8 6.4 6.2H8.4" stroke-width="0.8"/></svg>
<div class="a" style="left:27.60px;top:92.40px;width:0;height:0;border-left:2px solid transparent;border-right:2px solid transparent;border-top:2.4px solid #bdbdbd"></div>
<div class="t ui" style="left:34px;top:86.20px;height:14px;line-height:14px;font-size:9.6px;color:#dcdcdc;-webkit-text-stroke:0.28px #dcdcdc;transform:scaleX(0.8923)">Heading : H2</div>
<svg class="a" style="left:9.60px;top:108.20px" width="11" height="11" viewBox="0 0 11 11" fill="none" stroke="#dedede" stroke-width="1.25"><rect x="0.6" y="0.6" width="9" height="9.6" rx="0.8"/><path d="M5.1 0.6V10.2M0.6 3.8H9.6M0.6 7H9.6" stroke-width="1"/></svg>
<div class="t ui" style="left:34px;top:106.30px;height:14px;line-height:14px;font-size:9.6px;color:#dcdcdc;-webkit-text-stroke:0.28px #dcdcdc;transform:scaleX(0.8700)">Table</div>
<svg class="a" style="left:9.20px;top:128.60px" width="12" height="10" viewBox="0 0 12 10" fill="none" stroke="#dedede" stroke-width="1.25"><rect x="0.6" y="0.6" width="10" height="8.6" rx="0.6"/><path d="M1.6 6.2L3.8 3.8L5.4 5.4L7 4.2L9.6 6.2Z" fill="#dedede" stroke="none"/><path d="M1.6 7.8H9.6" stroke-width="0.9"/><circle cx="7.8" cy="2.6" r="0.8" fill="#dedede" stroke="none"/></svg>
<div class="t ui" style="left:34px;top:126.80px;height:14px;line-height:14px;font-size:9.6px;color:#dcdcdc;-webkit-text-stroke:0.28px #dcdcdc;transform:scaleX(0.8700)">Figure</div>
<div class="t ui" style="left:10.50px;top:146.80px;height:14px;line-height:14px;font-size:11.5px;font-weight:bold;color:#d8d8d8;transform:scaleX(0.8806)">ul</div>
<div class="t ui" style="left:34px;top:147.30px;height:14px;line-height:14px;font-size:9.6px;color:#dcdcdc;-webkit-text-stroke:0.28px #dcdcdc;transform:scaleX(0.9052)">Unordered List</div>
<div class="t ui" style="left:10.50px;top:167.20px;height:14px;line-height:14px;font-size:11.5px;font-weight:bold;color:#d8d8d8;transform:scaleX(0.8806)">ol</div>
<div class="t ui" style="left:34px;top:167.70px;height:14px;line-height:14px;font-size:9.6px;color:#dcdcdc;-webkit-text-stroke:0.28px #dcdcdc;transform:scaleX(0.9087)">Ordered List</div>
<div class="t ui" style="left:11.50px;top:187.00px;height:14px;line-height:14px;font-size:11.5px;font-weight:bold;color:#d8d8d8;transform:scaleX(0.9390)">li</div>
<div class="t ui" style="left:34px;top:187.70px;height:14px;line-height:14px;font-size:9.6px;color:#dcdcdc;-webkit-text-stroke:0.28px #dcdcdc;transform:scaleX(0.9097)">List Item</div>
<svg class="a" style="left:11.00px;top:209.80px" width="8" height="11" viewBox="0 0 8 11" fill="none" stroke="#dedede" stroke-width="1.25"><path d="M2.2 4.6Q1 3 2.4 1.6Q4 0.4 5.6 1.6Q7 3 5.8 4.6M2.2 6.4Q1 8 2.4 9.4Q4 10.6 5.6 9.4Q7 8 5.8 6.4M4 3.4V7.6" stroke-width="1"/></svg>
<div class="t ui" style="left:34px;top:208.30px;height:14px;line-height:14px;font-size:9.6px;color:#dcdcdc;-webkit-text-stroke:0.28px #dcdcdc;transform:scaleX(0.9247)">Hyperlink</div>
<div class="a" style="left:0;top:235.0px;width:300px;height:1px;background:#353535"></div>
<svg class="a" style="left:10.00px;top:250.60px" width="12" height="10.6" viewBox="0 0 12 10.6" fill="none" stroke="#dedede" stroke-width="1.25"><rect x="0.6" y="0.6" width="10" height="9.2" rx="0.6"/><path d="M0.6 3.2H10.6" stroke-width="1"/><path d="M1 1H10.2V3H1Z" fill="#8a8a8a" stroke="none"/></svg>
<div class="t ui" style="left:34px;top:248.60px;height:14px;line-height:14px;font-size:9.6px;color:#dcdcdc;-webkit-text-stroke:0.28px #dcdcdc;transform:scaleX(0.8700)">Header</div>
<svg class="a" style="left:10.00px;top:272.80px" width="12" height="7.6" viewBox="0 0 12 7.6" fill="none" stroke="#dedede" stroke-width="1.25"><rect x="0.6" y="0.6" width="10.2" height="6" rx="0.6"/><path d="M3.6 2.2L2.2 3.6L3.6 5M7.8 2.2L9.2 3.6L7.8 5" stroke-width="0.9"/><rect x="4.8" y="2.4" width="1.8" height="2.4" fill="#dedede" stroke="none"/></svg>
<div class="t ui" style="left:34px;top:269.20px;height:14px;line-height:14px;font-size:9.6px;color:#dcdcdc;-webkit-text-stroke:0.28px #dcdcdc;transform:scaleX(0.9038)">Navigation</div>
<svg class="a" style="left:10.00px;top:291.00px" width="12" height="11.6" viewBox="0 0 12 11.6" fill="none" stroke="#dedede" stroke-width="1.25"><rect x="0.6" y="0.6" width="10" height="10.2" rx="0.6"/><path d="M0.6 3.2H10.6M0.6 8.2H10.6" stroke-width="0.9"/><path d="M1.4 4H9.8V7.4H1.4Z" fill="#7a7a7a" stroke="none"/></svg>
<div class="t ui" style="left:34px;top:289.60px;height:14px;line-height:14px;font-size:9.6px;color:#dcdcdc;-webkit-text-stroke:0.28px #dcdcdc;transform:scaleX(0.8700)">Main</div>
<svg class="a" style="left:10.00px;top:312.20px" width="12" height="11" viewBox="0 0 12 11" fill="none" stroke="#dedede" stroke-width="1.25"><rect x="0.6" y="0.6" width="10" height="10" rx="0.6"/><path d="M6.6 3H10.6M6.6 3V10.6" stroke-width="0.9"/></svg>
<div class="t ui" style="left:34px;top:310.00px;height:14px;line-height:14px;font-size:9.6px;color:#dcdcdc;-webkit-text-stroke:0.28px #dcdcdc;transform:scaleX(0.8700)">Aside</div>
</div>
<div class="a" style="left:886px;top:343px;width:314px;height:12.5px;background:#252525"></div>
<div class="a" style="left:886px;top:343px;width:27.6px;height:12.5px;background:#303030"></div>
<div class="t ui" style="left:891.00px;top:342.60px;height:14px;line-height:14px;font-size:9.30px;color:#ffffff;font-weight:bold;transform:scaleX(0.8296);">DOM</div>
<div class="t ui" style="left:919.00px;top:342.60px;height:14px;line-height:14px;font-size:9.30px;color:#b4b4b4;font-weight:bold;transform:scaleX(0.7868);">Assets</div>
<div class="t ui" style="left:953.60px;top:342.60px;height:14px;line-height:14px;font-size:9.30px;color:#b4b4b4;font-weight:bold;transform:scaleX(0.8021);">Snippets</div>
<div class="a" style="left:1187.5px;top:347px;width:8px;height:6px;background:#5a5a5a"></div>
<div class="a" style="left:886px;top:355.5px;width:304px;height:311px;overflow:hidden">
<svg class="a" style="left:50.70px;top:-3.48px" width="38.1" height="12.0"><path d="M0.6 0.6H31.7L36.6 5.5L31.7 10.4H0.6Z" fill="none" stroke="#cdcdcd" stroke-width="1"/></svg>
<div class="t ui" style="left:54.80px;top:-4.08px;height:12px;line-height:12px;font-size:8.4px;font-weight:bold;color:#e2e2e2;transform:scaleX(0.993)">header</div>
<div class="t ui" style="left:91.76px;top:-4.98px;height:14px;line-height:14px;font-size:9.6px;color:#dcdcdc;-webkit-text-stroke:0.25px #dcdcdc;transform:scaleX(0.875)">#Heading</div>
<svg class="a" style="left:39.20px;top:0.02px" width="7" height="5"><path d="M0.8 0.8L3.5 3.6L6.2 0.8" stroke="#bdbdbd" stroke-width="1.1" fill="none"/></svg>
<svg class="a" style="left:61.90px;top:13.20px" width="20.4" height="12.0"><path d="M0.6 0.6H14.0L18.9 5.5L14.0 10.4H0.6Z" fill="none" stroke="#cdcdcd" stroke-width="1"/></svg>
<div class="t ui" style="left:66.00px;top:12.60px;height:12px;line-height:12px;font-size:8.4px;font-weight:bold;color:#e2e2e2;transform:scaleX(0.993)">h2</div>
<div class="t ui" style="left:85.34px;top:11.70px;height:14px;line-height:14px;font-size:9.6px;color:#dcdcdc;-webkit-text-stroke:0.25px #dcdcdc;transform:scaleX(0.875)">#Heading</div>
<svg class="a" style="left:61.90px;top:29.88px" width="15.8" height="12.0"><path d="M0.6 0.6H9.4L14.3 5.5L9.4 10.4H0.6Z" fill="none" stroke="#cdcdcd" stroke-width="1"/></svg>
<div class="t ui" style="left:66.00px;top:29.28px;height:12px;line-height:12px;font-size:8.4px;font-weight:bold;color:#e2e2e2;transform:scaleX(0.993)">p</div>
<svg class="a" style="left:61.90px;top:46.56px" width="25.5" height="12.0"><path d="M0.6 0.6H19.1L24.0 5.5L19.1 10.4H0.6Z" fill="none" stroke="#cdcdcd" stroke-width="1"/></svg>
<div class="t ui" style="left:66.00px;top:45.96px;height:12px;line-height:12px;font-size:8.4px;font-weight:bold;color:#e2e2e2;transform:scaleX(0.993)">img</div>
<svg class="a" style="left:61.90px;top:63.24px" width="15.8" height="12.0"><path d="M0.6 0.6H9.4L14.3 5.5L9.4 10.4H0.6Z" fill="none" stroke="#cdcdcd" stroke-width="1"/></svg>
<div class="t ui" style="left:66.00px;top:62.64px;height:12px;line-height:12px;font-size:8.4px;font-weight:bold;color:#e2e2e2;transform:scaleX(0.993)">p</div>
<svg class="a" style="left:50.70px;top:79.92px" width="22.8" height="12.0"><path d="M0.6 0.6H16.4L21.3 5.5L16.4 10.4H0.6Z" fill="none" stroke="#cdcdcd" stroke-width="1"/></svg>
<div class="t ui" style="left:54.80px;top:79.32px;height:12px;line-height:12px;font-size:8.4px;font-weight:bold;color:#e2e2e2;transform:scaleX(0.993)">div</div>
<div class="t ui" style="left:76.45px;top:78.42px;height:14px;line-height:14px;font-size:9.6px;color:#dcdcdc;-webkit-text-stroke:0.25px #dcdcdc;transform:scaleX(0.875)">.profileLogo</div>
<svg class="a" style="left:39.20px;top:83.42px" width="7" height="5"><path d="M0.8 0.8L3.5 3.6L6.2 0.8" stroke="#bdbdbd" stroke-width="1.1" fill="none"/></svg>
<svg class="a" style="left:61.90px;top:96.60px" width="15.8" height="12.0"><path d="M0.6 0.6H9.4L14.3 5.5L9.4 10.4H0.6Z" fill="none" stroke="#cdcdcd" stroke-width="1"/></svg>
<div class="t ui" style="left:66.00px;top:96.00px;height:12px;line-height:12px;font-size:8.4px;font-weight:bold;color:#e2e2e2;transform:scaleX(0.993)">p</div>
<div class="t ui" style="left:80.70px;top:95.10px;height:14px;line-height:14px;font-size:9.6px;color:#dcdcdc;-webkit-text-stroke:0.25px #dcdcdc;transform:scaleX(0.875)">.logoPlaceholder</div>
<svg class="a" style="left:50.40px;top:100.10px" width="7" height="5"><path d="M0.8 0.8L3.5 3.6L6.2 0.8" stroke="#bdbdbd" stroke-width="1.1" fill="none"/></svg>
<svg class="a" style="left:73.10px;top:113.28px" width="30.2" height="12.0"><path d="M0.6 0.6H23.8L28.7 5.5L23.8 10.4H0.6Z" fill="none" stroke="#cdcdcd" stroke-width="1"/></svg>
<div class="t ui" style="left:77.20px;top:112.68px;height:12px;line-height:12px;font-size:8.4px;font-weight:bold;color:#e2e2e2;transform:scaleX(0.993)">span</div>
<svg class="a" style="left:50.70px;top:129.96px" width="22.8" height="12.0"><path d="M0.6 0.6H16.4L21.3 5.5L16.4 10.4H0.6Z" fill="none" stroke="#cdcdcd" stroke-width="1"/></svg>
<div class="t ui" style="left:54.80px;top:129.36px;height:12px;line-height:12px;font-size:8.4px;font-weight:bold;color:#e2e2e2;transform:scaleX(0.993)">div</div>
<div class="t ui" style="left:76.45px;top:128.46px;height:14px;line-height:14px;font-size:9.6px;color:#dcdcdc;-webkit-text-stroke:0.25px #dcdcdc;transform:scaleX(0.875)">.profilePhoto</div>
<svg class="a" style="left:50.70px;top:146.64px" width="39.9" height="12.0"><path d="M0.6 0.6H33.5L38.4 5.5L33.5 10.4H0.6Z" fill="none" stroke="#cdcdcd" stroke-width="1"/></svg>
<div class="t ui" style="left:54.80px;top:146.04px;height:12px;line-height:12px;font-size:8.4px;font-weight:bold;color:#e2e2e2;transform:scaleX(0.993)">section</div>
<div class="t ui" style="left:93.61px;top:145.14px;height:14px;line-height:14px;font-size:9.6px;color:#dcdcdc;-webkit-text-stroke:0.25px #dcdcdc;word-spacing:1.15px;transform:scaleX(0.875)">.profileHeader&ndash;help .me .I .have .been .trapped .in .a .stranger</div>
<svg class="a" style="left:39.20px;top:150.14px" width="7" height="5"><path d="M0.8 0.8L3.5 3.6L6.2 0.8" stroke="#bdbdbd" stroke-width="1.1" fill="none"/></svg>
<svg class="a" style="left:61.90px;top:163.32px" width="20.4" height="12.0"><path d="M0.6 0.6H14.0L18.9 5.5L14.0 10.4H0.6Z" fill="none" stroke="#cdcdcd" stroke-width="1"/></svg>
<div class="t ui" style="left:66.00px;top:162.72px;height:12px;line-height:12px;font-size:8.4px;font-weight:bold;color:#e2e2e2;transform:scaleX(0.993)">h1</div>
<svg class="a" style="left:61.90px;top:180.00px" width="20.4" height="12.0"><path d="M0.6 0.6H14.0L18.9 5.5L14.0 10.4H0.6Z" fill="none" stroke="#cdcdcd" stroke-width="1"/></svg>
<div class="t ui" style="left:66.00px;top:179.40px;height:12px;line-height:12px;font-size:8.4px;font-weight:bold;color:#e2e2e2;transform:scaleX(0.993)">h3</div>
<svg class="a" style="left:61.90px;top:196.68px" width="19.0" height="12.0"><path d="M0.6 0.6H12.6L17.5 5.5L12.6 10.4H0.6Z" fill="none" stroke="#cdcdcd" stroke-width="1"/></svg>
<div class="t ui" style="left:66.00px;top:196.08px;height:12px;line-height:12px;font-size:8.4px;font-weight:bold;color:#e2e2e2;transform:scaleX(0.993)">hr</div>
<svg class="a" style="left:61.90px;top:213.36px" width="15.8" height="12.0"><path d="M0.6 0.6H9.4L14.3 5.5L9.4 10.4H0.6Z" fill="none" stroke="#cdcdcd" stroke-width="1"/></svg>
<div class="t ui" style="left:66.00px;top:212.76px;height:12px;line-height:12px;font-size:8.4px;font-weight:bold;color:#e2e2e2;transform:scaleX(0.993)">p</div>
<svg class="a" style="left:61.90px;top:230.04px" width="15.8" height="12.0"><path d="M0.6 0.6H9.4L14.3 5.5L9.4 10.4H0.6Z" fill="none" stroke="#cdcdcd" stroke-width="1"/></svg>
<div class="t ui" style="left:66.00px;top:229.44px;height:12px;line-height:12px;font-size:8.4px;font-weight:bold;color:#e2e2e2;transform:scaleX(0.993)">p</div>
<svg class="a" style="left:50.70px;top:246.72px" width="32.0" height="12.0"><path d="M0.6 0.6H25.6L30.5 5.5L25.6 10.4H0.6Z" fill="none" stroke="#cdcdcd" stroke-width="1"/></svg>
<div class="t ui" style="left:54.80px;top:246.12px;height:12px;line-height:12px;font-size:8.4px;font-weight:bold;color:#e2e2e2;transform:scaleX(0.993)">aside</div>
<div class="t ui" style="left:85.73px;top:245.22px;height:14px;line-height:14px;font-size:9.6px;color:#dcdcdc;-webkit-text-stroke:0.25px #dcdcdc;transform:scaleX(0.875)">.socialNetworkNavBar</div>
<svg class="a" style="left:39.20px;top:250.22px" width="7" height="5"><path d="M0.8 0.8L3.5 3.6L6.2 0.8" stroke="#bdbdbd" stroke-width="1.1" fill="none"/></svg>
<svg class="a" style="left:61.90px;top:263.40px" width="22.8" height="12.0"><path d="M0.6 0.6H16.4L21.3 5.5L16.4 10.4H0.6Z" fill="none" stroke="#cdcdcd" stroke-width="1"/></svg>
<div class="t ui" style="left:66.00px;top:262.80px;height:12px;line-height:12px;font-size:8.4px;font-weight:bold;color:#e2e2e2;transform:scaleX(0.993)">div</div>
<div class="t ui" style="left:87.65px;top:261.90px;height:14px;line-height:14px;font-size:9.6px;color:#dcdcdc;-webkit-text-stroke:0.25px #dcdcdc;transform:scaleX(0.875)">.socialNetworkNav</div>
<svg class="a" style="left:50.40px;top:266.90px" width="7" height="5"><path d="M0.8 0.8L3.5 3.6L6.2 0.8" stroke="#bdbdbd" stroke-width="1.1" fill="none"/></svg>
<div class="a" style="left:0;top:277.58px;width:304px;height:16px;background:#30486f"></div>
<svg class="a" style="left:73.10px;top:280.08px" width="25.5" height="12.0"><path d="M0.6 0.6H19.1L24.0 5.5L19.1 10.4H0.6Z" fill="none" stroke="#cdcdcd" stroke-width="1"/></svg>
<div class="t ui" style="left:77.20px;top:279.48px;height:12px;line-height:12px;font-size:8.4px;font-weight:bold;color:#e2e2e2;transform:scaleX(0.993)">img</div>
<svg class="a" style="left:61.90px;top:296.76px" width="22.8" height="12.0"><path d="M0.6 0.6H16.4L21.3 5.5L16.4 10.4H0.6Z" fill="none" stroke="#cdcdcd" stroke-width="1"/></svg>
<div class="t ui" style="left:66.00px;top:296.16px;height:12px;line-height:12px;font-size:8.4px;font-weight:bold;color:#e2e2e2;transform:scaleX(0.993)">div</div>
<div class="t ui" style="left:87.65px;top:295.26px;height:14px;line-height:14px;font-size:9.6px;color:#dcdcdc;-webkit-text-stroke:0.25px #dcdcdc;transform:scaleX(0.875)">.socialNetworkNav</div>
<svg class="a" style="left:50.40px;top:300.26px" width="7" height="5"><path d="M0.8 0.8L3.5 3.6L6.2 0.8" stroke="#bdbdbd" stroke-width="1.1" fill="none"/></svg>
</div>
<div class="a" style="left:1190px;top:355.5px;width:10px;height:311px;background:#2a2a2a"></div>
<div class="a" style="left:1190.8px;top:386px;width:7px;height:141px;border-radius:3.5px;background:#3d3d3d"></div>
<div class="a" style="left:886px;top:666.5px;width:314px;height:8.5px;background:#262626"></div>
<div class="a" style="left:889px;top:667.5px;width:206px;height:6.5px;border-radius:3.2px;background:#3d3d3d"></div>
<div class="a" style="left:764px;top:475px;width:183.5px;height:194px;background:#f0f0f0;border-radius:5px;box-shadow:0 0 0 0.5px rgba(0,0,0,.35),0 4px 12px rgba(0,0,0,.35);overflow:hidden">
<div class="t ui" style="left:13.77px;top:2.30px;height:14px;line-height:14px;font-size:10.80px;color:#3a3a3a;-webkit-text-stroke:0.2px #3a3a3a;transform-origin:100% 50%;transform:scaleX(0.9300)">1024</div>
<div class="t ui" style="left:41.30px;top:2.30px;height:14px;line-height:14px;font-size:10.80px;color:#3a3a3a;-webkit-text-stroke:0.2px #3a3a3a;transform:scaleX(0.9300)">x</div>
<div class="t ui" style="left:54.78px;top:2.30px;height:14px;line-height:14px;font-size:10.80px;color:#3a3a3a;-webkit-text-stroke:0.2px #3a3a3a;transform-origin:100% 50%;transform:scaleX(0.9300)">768</div>
<div class="t ui" style="left:89.50px;top:2.30px;height:14px;line-height:14px;font-size:10.80px;color:#3a3a3a;-webkit-text-stroke:0.2px #3a3a3a;transform:scaleX(0.9500)">iPad</div>
<div class="t ui" style="left:19.78px;top:16.16px;height:14px;line-height:14px;font-size:10.80px;color:#3a3a3a;-webkit-text-stroke:0.2px #3a3a3a;transform-origin:100% 50%;transform:scaleX(0.9300)">375</div>
<div class="t ui" style="left:41.30px;top:16.16px;height:14px;line-height:14px;font-size:10.80px;color:#3a3a3a;-webkit-text-stroke:0.2px #3a3a3a;transform:scaleX(0.9300)">x</div>
<div class="t ui" style="left:54.78px;top:16.16px;height:14px;line-height:14px;font-size:10.80px;color:#3a3a3a;-webkit-text-stroke:0.2px #3a3a3a;transform-origin:100% 50%;transform:scaleX(0.9300)">667</div>
<div class="t ui" style="left:89.50px;top:16.16px;height:14px;line-height:14px;font-size:10.80px;color:#3a3a3a;-webkit-text-stroke:0.2px #3a3a3a;transform:scaleX(0.9500)">iPhone 6s</div>
<div class="t ui" style="left:19.78px;top:30.02px;height:14px;line-height:14px;font-size:10.80px;color:#3a3a3a;-webkit-text-stroke:0.2px #3a3a3a;transform-origin:100% 50%;transform:scaleX(0.9300)">414</div>
<div class="t ui" style="left:41.30px;top:30.02px;height:14px;line-height:14px;font-size:10.80px;color:#3a3a3a;-webkit-text-stroke:0.2px #3a3a3a;transform:scaleX(0.9300)">x</div>
<div class="t ui" style="left:54.78px;top:30.02px;height:14px;line-height:14px;font-size:10.80px;color:#3a3a3a;-webkit-text-stroke:0.2px #3a3a3a;transform-origin:100% 50%;transform:scaleX(0.9300)">736</div>
<div class="t ui" style="left:89.50px;top:30.02px;height:14px;line-height:14px;font-size:10.80px;color:#3a3a3a;-webkit-text-stroke:0.2px #3a3a3a;transform:scaleX(0.9500)">iPhone 6s Plus</div>
<div class="t ui" style="left:19.78px;top:43.88px;height:14px;line-height:14px;font-size:10.80px;color:#3a3a3a;-webkit-text-stroke:0.2px #3a3a3a;transform-origin:100% 50%;transform:scaleX(0.9300)">375</div>
<div class="t ui" style="left:41.30px;top:43.88px;height:14px;line-height:14px;font-size:10.80px;color:#3a3a3a;-webkit-text-stroke:0.2px #3a3a3a;transform:scaleX(0.9300)">x</div>
<div class="t ui" style="left:54.78px;top:43.88px;height:14px;line-height:14px;font-size:10.80px;color:#3a3a3a;-webkit-text-stroke:0.2px #3a3a3a;transform-origin:100% 50%;transform:scaleX(0.9300)">667</div>
<div class="t ui" style="left:89.50px;top:43.88px;height:14px;line-height:14px;font-size:10.80px;color:#3a3a3a;-webkit-text-stroke:0.2px #3a3a3a;transform:scaleX(0.9500)">iPhone 7</div>
<div class="a" style="left:0;top:58.80px;width:183.5px;height:12.6px;background:#1a6ce8"></div>
<div class="t ui" style="left:19.78px;top:57.74px;height:14px;line-height:14px;font-size:10.80px;color:#ffffff;-webkit-text-stroke:0.2px #ffffff;transform-origin:100% 50%;transform:scaleX(0.9300)">414</div>
<div class="t ui" style="left:41.30px;top:57.74px;height:14px;line-height:14px;font-size:10.80px;color:#ffffff;-webkit-text-stroke:0.2px #ffffff;transform:scaleX(0.9300)">x</div>
<div class="t ui" style="left:54.78px;top:57.74px;height:14px;line-height:14px;font-size:10.80px;color:#ffffff;-webkit-text-stroke:0.2px #ffffff;transform-origin:100% 50%;transform:scaleX(0.9300)">736</div>
<div class="t ui" style="left:89.50px;top:57.74px;height:14px;line-height:14px;font-size:10.80px;color:#ffffff;-webkit-text-stroke:0.2px #ffffff;transform:scaleX(0.9500)">iPhone 7 Plus</div>
<div class="t ui" style="left:13.77px;top:71.60px;height:14px;line-height:14px;font-size:10.80px;color:#3a3a3a;-webkit-text-stroke:0.2px #3a3a3a;transform-origin:100% 50%;transform:scaleX(0.9300)">1366</div>
<div class="t ui" style="left:41.30px;top:71.60px;height:14px;line-height:14px;font-size:10.80px;color:#3a3a3a;-webkit-text-stroke:0.2px #3a3a3a;transform:scaleX(0.9300)">x</div>
<div class="t ui" style="left:48.77px;top:71.60px;height:14px;line-height:14px;font-size:10.80px;color:#3a3a3a;-webkit-text-stroke:0.2px #3a3a3a;transform-origin:100% 50%;transform:scaleX(0.9300)">1024</div>
<div class="t ui" style="left:89.50px;top:71.60px;height:14px;line-height:14px;font-size:10.80px;color:#3a3a3a;-webkit-text-stroke:0.2px #3a3a3a;transform:scaleX(0.9500)">iPad Pro</div>
<div class="t ui" style="left:19.78px;top:85.46px;height:14px;line-height:14px;font-size:10.80px;color:#3a3a3a;-webkit-text-stroke:0.2px #3a3a3a;transform-origin:100% 50%;transform:scaleX(0.9300)">412</div>
<div class="t ui" style="left:41.30px;top:85.46px;height:14px;line-height:14px;font-size:10.80px;color:#3a3a3a;-webkit-text-stroke:0.2px #3a3a3a;transform:scaleX(0.9300)">x</div>
<div class="t ui" style="left:54.78px;top:85.46px;height:14px;line-height:14px;font-size:10.80px;color:#3a3a3a;-webkit-text-stroke:0.2px #3a3a3a;transform-origin:100% 50%;transform:scaleX(0.9300)">732</div>
<div class="t ui" style="left:89.50px;top:85.46px;height:14px;line-height:14px;font-size:10.80px;color:#3a3a3a;-webkit-text-stroke:0.2px #3a3a3a;transform:scaleX(0.9500)">Google Pixel</div>
<div class="t ui" style="left:19.78px;top:99.32px;height:14px;line-height:14px;font-size:10.80px;color:#3a3a3a;-webkit-text-stroke:0.2px #3a3a3a;transform-origin:100% 50%;transform:scaleX(0.9300)">412</div>
<div class="t ui" style="left:41.30px;top:99.32px;height:14px;line-height:14px;font-size:10.80px;color:#3a3a3a;-webkit-text-stroke:0.2px #3a3a3a;transform:scaleX(0.9300)">x</div>
<div class="t ui" style="left:54.78px;top:99.32px;height:14px;line-height:14px;font-size:10.80px;color:#3a3a3a;-webkit-text-stroke:0.2px #3a3a3a;transform-origin:100% 50%;transform:scaleX(0.9300)">732</div>
<div class="t ui" style="left:89.50px;top:99.32px;height:14px;line-height:14px;font-size:10.80px;color:#3a3a3a;-webkit-text-stroke:0.2px #3a3a3a;transform:scaleX(0.9500)">Google Pixel XL</div>
<div class="t ui" style="left:13.77px;top:113.18px;height:14px;line-height:14px;font-size:10.80px;color:#3a3a3a;-webkit-text-stroke:0.2px #3a3a3a;transform-origin:100% 50%;transform:scaleX(0.9300)">1280</div>
<div class="t ui" style="left:41.30px;top:113.18px;height:14px;line-height:14px;font-size:10.80px;color:#3a3a3a;-webkit-text-stroke:0.2px #3a3a3a;transform:scaleX(0.9300)">x</div>
<div class="t ui" style="left:54.78px;top:113.18px;height:14px;line-height:14px;font-size:10.80px;color:#3a3a3a;-webkit-text-stroke:0.2px #3a3a3a;transform-origin:100% 50%;transform:scaleX(0.9300)">800</div>
<div class="t ui" style="left:89.50px;top:113.18px;height:14px;line-height:14px;font-size:10.80px;color:#3a3a3a;-webkit-text-stroke:0.2px #3a3a3a;transform:scaleX(0.9500)">Google Nexus 10</div>
<svg class="a" style="left:4.00px;top:129.54px" width="9" height="9" viewBox="0 0 9 9"><path d="M1 5L3.4 7.6L8 1" fill="none" stroke="#3a3a3a" stroke-width="1.3"/></svg>
<div class="t ui" style="left:15.00px;top:127.04px;height:14px;line-height:14px;font-size:10.80px;color:#3a3a3a;-webkit-text-stroke:0.2px #3a3a3a;transform:scaleX(0.9300)">Full Size</div>
<div class="t ui" style="left:15.00px;top:140.90px;height:14px;line-height:14px;font-size:10.80px;color:#3a3a3a;-webkit-text-stroke:0.2px #3a3a3a;transform:scaleX(0.9300)">Edit Sizes...</div>
<div class="a" style="left:0;top:159.00px;width:183.5px;height:1px;background:#d2d2d2"></div>
<svg class="a" style="left:4.00px;top:165.30px" width="9" height="9" viewBox="0 0 9 9"><path d="M1 5L3.4 7.6L8 1" fill="none" stroke="#3a3a3a" stroke-width="1.3"/></svg>
<div class="t ui" style="left:15.00px;top:162.80px;height:14px;line-height:14px;font-size:10.80px;color:#3a3a3a;-webkit-text-stroke:0.2px #3a3a3a;transform:scaleX(0.9754)">Orientation Landscape</div>
<div class="t ui" style="left:15.00px;top:176.60px;height:14px;line-height:14px;font-size:10.80px;color:#3a3a3a;-webkit-text-stroke:0.2px #3a3a3a;transform:scaleX(0.9885)">Orientation Portrait</div>
</div>
</div></body></html>
